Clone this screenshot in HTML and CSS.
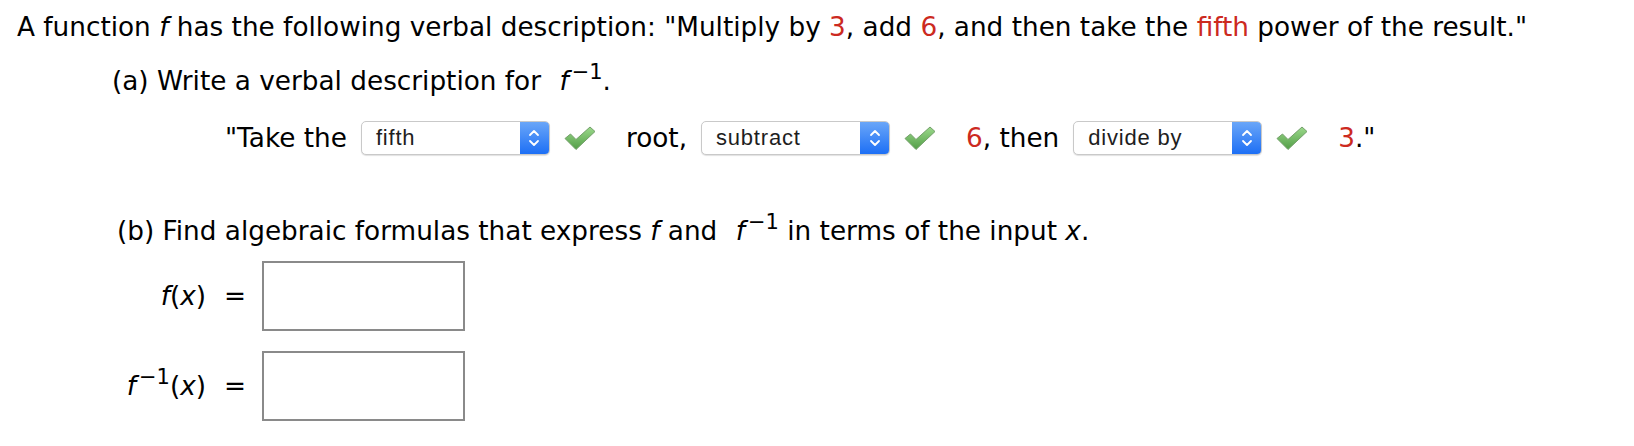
FILE: index.html
```html
<!DOCTYPE html>
<html>
<head>
<meta charset="utf-8">
<link rel="stylesheet" href="styles.css">
</head>
<body>
<div class="page">
  <p class="intro">A function <i class="var">f</i> has the following verbal description: "Multiply by <span class="red">3</span>, add <span class="red">6</span>, and then take the <span class="red">fifth</span> power of the result."</p>

  <p class="part-a">(a) Write a verbal description for <span class="inv"><i class="var">f</i><sup>−1</sup></span>.</p>

  <div class="answer-row">
    <span class="txt">"Take the</span>
    <span class="select"><span class="sel-text">fifth</span><span class="sel-btn"><svg viewBox="0 0 12 22" width="12" height="22"><path d="M2 8 L6 4 L10 8" /><path d="M2 14 L6 18 L10 14" /></svg></span></span>
    <svg class="check" viewBox="0 0 32 26" width="32" height="26"><defs><linearGradient id="g1" x1="0" y1="0" x2="0" y2="1"><stop offset="0" stop-color="#9bd98b"/><stop offset="1" stop-color="#529d46"/></linearGradient></defs><path d="M1 13.5 L6.5 9 L12 14.5 L26 2 L31 6.5 L12 24.5 Z" fill="url(#g1)" stroke="#74a06b" stroke-width="1" stroke-linejoin="round"/></svg>
    <span class="txt gap">root,</span>
    <span class="select"><span class="sel-text">subtract</span><span class="sel-btn"><svg viewBox="0 0 12 22" width="12" height="22"><path d="M2 8 L6 4 L10 8" /><path d="M2 14 L6 18 L10 14" /></svg></span></span>
    <svg class="check" viewBox="0 0 32 26" width="32" height="26"><path d="M1 13.5 L6.5 9 L12 14.5 L26 2 L31 6.5 L12 24.5 Z" fill="url(#g1)" stroke="#74a06b" stroke-width="1" stroke-linejoin="round"/></svg>
    <span class="txt gap"><span class="red">6</span>, then</span>
    <span class="select"><span class="sel-text">divide by</span><span class="sel-btn"><svg viewBox="0 0 12 22" width="12" height="22"><path d="M2 8 L6 4 L10 8" /><path d="M2 14 L6 18 L10 14" /></svg></span></span>
    <svg class="check" viewBox="0 0 32 26" width="32" height="26"><path d="M1 13.5 L6.5 9 L12 14.5 L26 2 L31 6.5 L12 24.5 Z" fill="url(#g1)" stroke="#74a06b" stroke-width="1" stroke-linejoin="round"/></svg>
    <span class="txt gap"><span class="red">3</span>."</span>
  </div>

  <p class="part-b">(b) Find algebraic formulas that express <i class="var">f</i> and <span class="inv"><i class="var">f</i><sup>−1</sup></span> in terms of the input <i class="var">x</i>.</p>

  <div class="formulas">
    <div class="frow">
      <span class="flabel"><i class="var">f</i>(<i class="var">x</i>)</span>
      <span class="eq">=</span>
      <span class="fbox"></span>
    </div>
    <div class="frow">
      <span class="flabel"><i class="var">f</i><sup>−1</sup>(<i class="var">x</i>)</span>
      <span class="eq">=</span>
      <span class="fbox"></span>
    </div>
  </div>
</div>
</body>
</html>
```

FILE: styles.css
```css
html, body {
  margin: 0;
  padding: 0;
  background: #ffffff;
}

body {
  font-family: "DejaVu Sans", Verdana, sans-serif;
  font-size: 26.3px;
  color: #000000;
}

.page {
  padding-top: 10px;
}

p {
  margin: 0;
}

.var {
  font-style: italic;
}

.red {
  color: #cc2a1f;
}

.intro {
  padding-left: 17px;
  line-height: 34px;
}

.part-a {
  padding-left: 112px;
  margin-top: 20px;
  line-height: 34px;
}

.inv {
  margin-left: 10px;
}

sup {
  font-size: 21px;
  vertical-align: 11px;
  line-height: 0;
  margin-left: 3px;
}

.answer-row {
  display: flex;
  align-items: center;
  padding-left: 225px;
  margin-top: 22px;
  height: 36px;
}

.txt {
  margin-right: 14px;
}

.txt.gap {
  margin-left: 30px;
}

.select {
  display: flex;
  align-items: stretch;
  width: 189px;
  height: 34px;
  box-sizing: border-box;
  border: 1px solid #c9c9c9;
  border-radius: 5px;
  background: #ffffff;
  box-shadow: 0 1px 1px rgba(0, 0, 0, 0.12);
  overflow: hidden;
  font-family: "Liberation Sans", Arial, sans-serif;
  font-size: 22px;
  letter-spacing: 0.8px;
  color: #1e1e1e;
}

.sel-text {
  flex: 1;
  display: flex;
  align-items: center;
  padding-left: 14px;
}

.sel-btn {
  width: 29px;
  display: flex;
  align-items: center;
  justify-content: center;
  background: linear-gradient(#6aa6f8, #1d6ff5);
}

.sel-btn path {
  fill: none;
  stroke: #ffffff;
  stroke-width: 1.8;
  stroke-linecap: round;
  stroke-linejoin: round;
}

.check {
  margin-left: 14px;
  flex: none;
}

.part-b {
  padding-left: 117px;
  margin-top: 58px;
  line-height: 34px;
}

.formulas {
  display: flex;
  flex-direction: column;
  gap: 20px;
  margin-top: 13px;
}

.frow {
  display: flex;
  align-items: center;
}

.flabel {
  width: 206px;
  text-align: right;
}

.eq {
  margin-left: 18px;
  width: 16px;
}

.fbox {
  margin-left: 22px;
  width: 203px;
  height: 70px;
  box-sizing: border-box;
  border: 2px solid #8a8a8a;
}
```
